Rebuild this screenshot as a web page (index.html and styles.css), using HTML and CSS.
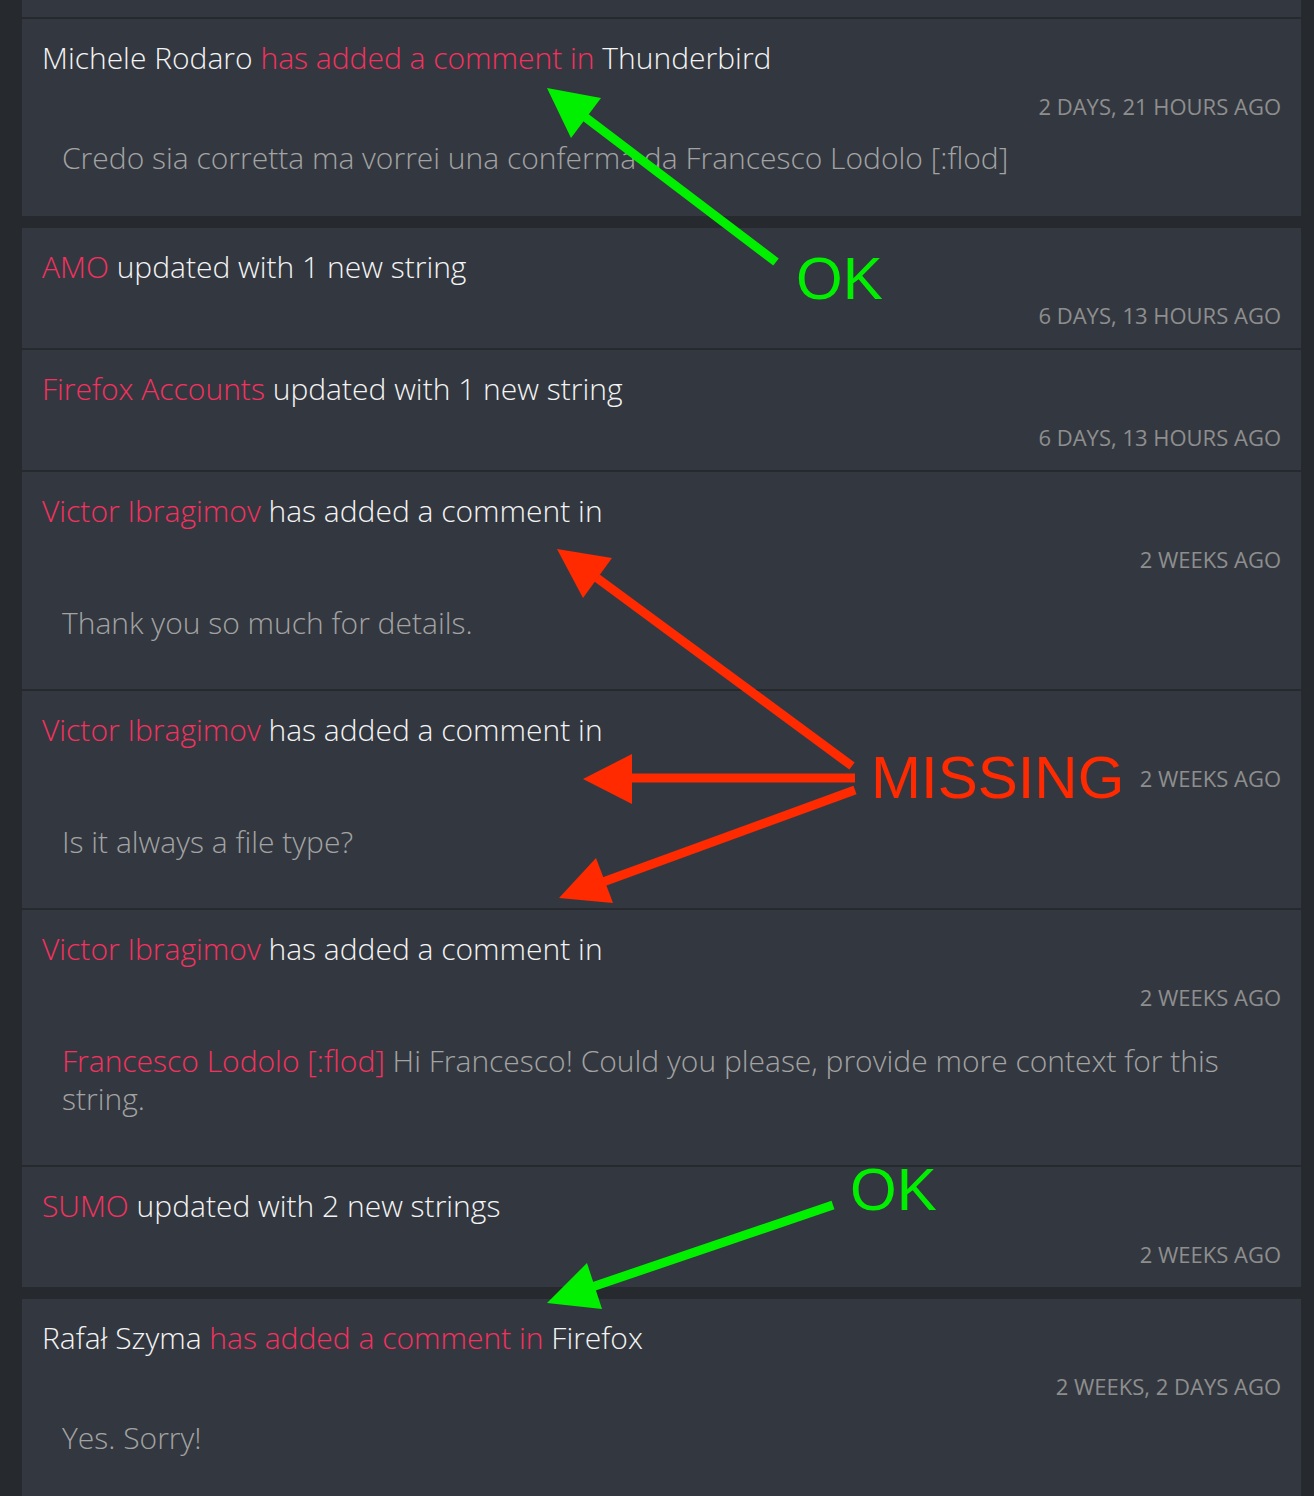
FILE: index.html
```html
<!DOCTYPE html>
<html>
<head>
  <title>Activity</title>
  <link rel="stylesheet" href="styles.css">
</head>
<body>
  <div class="group">
    <div class="card stub"></div>
    <div class="card">
      <div class="title">Michele Rodaro <span class="hl">has added a comment in</span> Thunderbird</div>
      <div class="time">2 days, 21 hours ago</div>
      <div class="comment">Credo sia corretta ma vorrei una conferma da Francesco Lodolo [:flod]</div>
    </div>
  </div>

  <div class="group">
    <div class="card">
      <div class="title"><span class="hl">AMO</span> updated with 1 new string</div>
      <div class="time">6 days, 13 hours ago</div>
    </div>
    <div class="card">
      <div class="title"><span class="hl">Firefox Accounts</span> updated with 1 new string</div>
      <div class="time">6 days, 13 hours ago</div>
    </div>
    <div class="card orphan">
      <div class="title"><span class="hl">Victor Ibragimov</span> has added a comment in</div>
      <div class="time">2 weeks ago</div>
      <div class="comment">Thank you so much for details.</div>
    </div>
    <div class="card orphan">
      <div class="title"><span class="hl">Victor Ibragimov</span> has added a comment in</div>
      <div class="time">2 weeks ago</div>
      <div class="comment">Is it always a file type?</div>
    </div>
    <div class="card orphan">
      <div class="title"><span class="hl">Victor Ibragimov</span> has added a comment in</div>
      <div class="time">2 weeks ago</div>
      <div class="comment"><span class="hl">Francesco Lodolo [:flod]</span> Hi Francesco! Could you please, provide more context for this string.</div>
    </div>
    <div class="card">
      <div class="title"><span class="hl">SUMO</span> updated with 2 new strings</div>
      <div class="time">2 weeks ago</div>
    </div>
  </div>

  <div class="group last">
    <div class="card">
      <div class="title">Rafał Szyma <span class="hl">has added a comment in</span> Firefox</div>
      <div class="time">2 weeks, 2 days ago</div>
      <div class="comment">Yes. Sorry!</div>
    </div>
  </div>

  <!-- review notes drawn over the screenshot -->
  <svg class="notes" width="1314" height="1496" viewBox="0 0 1314 1496">
    <g fill="#00f000" stroke="#00f000">
      <line x1="585" y1="117" x2="776" y2="262" stroke-width="9"/>
      <polygon points="547,88 601,98 571,138" stroke="none"/>
      <line x1="592" y1="1287" x2="833" y2="1205" stroke-width="9"/>
      <polygon points="547,1303 587,1263 602,1309" stroke="none"/>
      <text x="796" y="299" stroke="none">OK</text>
      <text x="850" y="1210" stroke="none">OK</text>
    </g>
    <g fill="#ff2a00" stroke="#ff2a00">
      <line x1="597" y1="578" x2="852" y2="766" stroke-width="9"/>
      <polygon points="557,549 612,558 583,598" stroke="none"/>
      <line x1="628" y1="778" x2="855" y2="778" stroke-width="9"/>
      <polygon points="583,779 632,754 632,804" stroke="none"/>
      <line x1="603" y1="882" x2="855" y2="790" stroke-width="9"/>
      <polygon points="559,898 596,858 613,903" stroke="none"/>
      <text x="871" y="798" stroke="none">MISSING</text>
    </g>
  </svg>
</body>
</html>
```

FILE: styles.css
```css
body {
  margin: 0;
  padding: 0 13px 0 22px;
  background-color: #26292e;
  font-family: "Open Sans", "DejaVu Sans", sans-serif;
  position: relative;
}

.group {
  display: flex;
  flex-direction: column;
  gap: 2px;
  margin-bottom: 12px;
}

.group.last {
  margin-bottom: 0;
}

.card {
  background: #333840;
  padding: 18px 20px;
}

.card.stub {
  height: 17px;
  padding: 0;
}

.title {
  color: #f4f4f4;
  font-size: 30px;
  line-height: 42px;
  font-weight: 300;
}

.hl {
  color: #f7305f;
}

.time {
  margin-top: 12px;
  text-align: right;
  text-transform: uppercase;
  color: #8e8e8e;
  font-size: 22px;
  line-height: 30px;
}

.comment {
  margin: 18px 0 21px;
  padding: 0 20px;
  color: #a3a3a3;
  font-size: 30px;
  line-height: 38px;
  font-weight: 300;
}

.orphan .comment {
  margin: 30px 0 29px;
}

.notes {
  position: absolute;
  top: 0;
  left: 0;
  pointer-events: none;
  font-family: "Liberation Sans", Arial, sans-serif;
  font-size: 60px;
}
```
